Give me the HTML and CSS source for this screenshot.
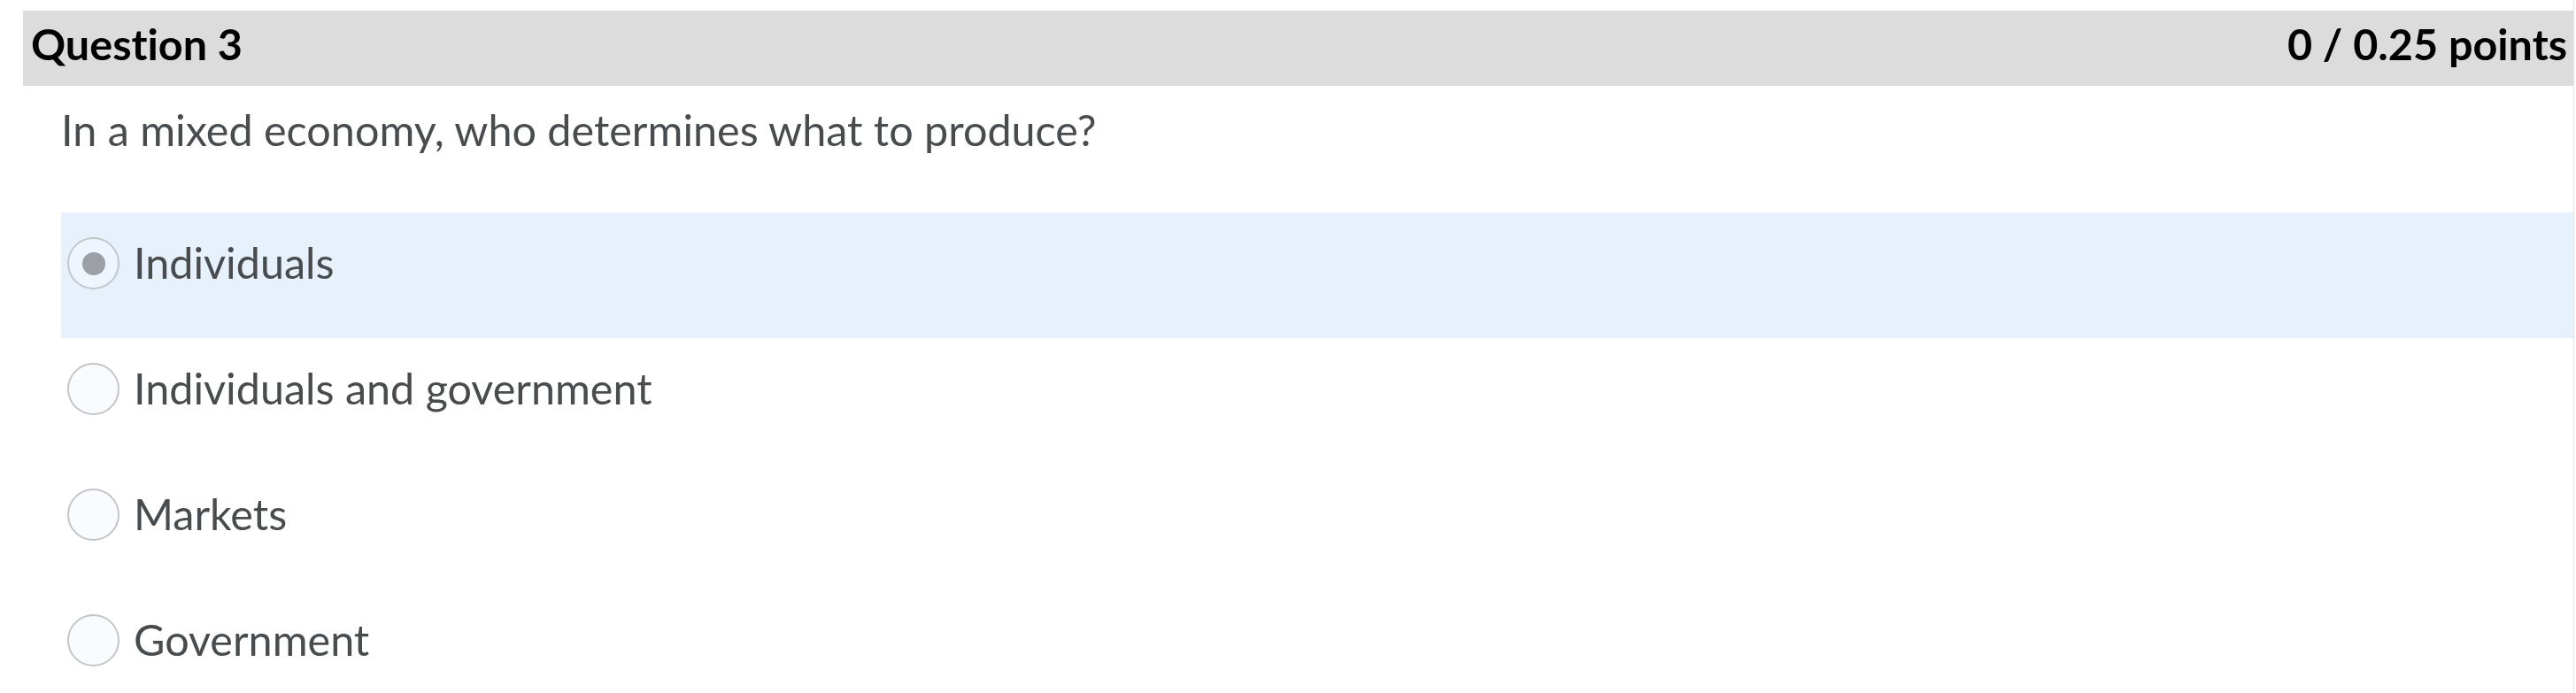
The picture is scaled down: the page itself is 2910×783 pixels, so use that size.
FILE: index.html
```html
<!DOCTYPE html>
<html lang="en">
<head>
<meta charset="utf-8">
<title>Question 3</title>
<link rel="stylesheet" href="styles.css">
</head>
<body>
<div class="frame">
  <div class="q-header">
    <h2 class="q-title">Question 3</h2>
    <div class="q-points">0 / 0.25 points</div>
  </div>
  <div class="q-body">
    <p class="q-text">In a mixed economy, who determines what to produce?</p>
    <ul class="choices">
      <li class="choice selected"><span class="radio checked"></span><span class="label">Individuals</span></li>
      <li class="choice"><span class="radio"></span><span class="label">Individuals and government</span></li>
      <li class="choice"><span class="radio"></span><span class="label">Markets</span></li>
      <li class="choice"><span class="radio"></span><span class="label">Government</span></li>
    </ul>
  </div>
</div>
</body>
</html>
```
FILE: styles.css
```css
html, body {
  margin: 0;
  padding: 0;
  background: #ffffff;
}
body {
  font-family: Lato, "Open Sans", sans-serif;
  color: #494c4e;
  overflow: hidden;
  font-variant-ligatures: none;
  font-feature-settings: "liga" 0;
}
.frame {
  width: 2908px;
  box-sizing: border-box;
  border-right: 1px solid #e4e4e4;
  padding: 12px 0 0 26px;
  min-height: 783px;
}
.q-header {
  height: 85px;
  box-sizing: border-box;
  background: #dcdcdc;
  display: flex;
  justify-content: space-between;
  align-items: flex-start;
  padding: 8px 7px 0 9px;
  color: #000000;
}
.q-title, .q-points {
  margin: 0;
  font-size: 48.5px;
  font-weight: 700;
  line-height: 58px;
}
.q-body {
  padding-left: 43px;
}
.q-text {
  margin: 20px 0 0 0;
  font-size: 48.5px;
  line-height: 58px;
}
.choices {
  list-style: none;
  margin: 65px 0 0 0;
  padding: 0;
}
.choice {
  height: 142px;
  box-sizing: border-box;
  padding: 28px 0 0 7px;
  display: flex;
  align-items: flex-start;
  gap: 16px;
}
.choice.selected {
  background: #e7f1fb;
}
.radio {
  flex: none;
  width: 59px;
  height: 59px;
  box-sizing: border-box;
  border: 2px solid #c3c6c9;
  border-radius: 50%;
  background: #f9fbfe;
  display: flex;
  align-items: center;
  justify-content: center;
}
.choice.selected .radio {
  background: #eef5fd;
}
.radio.checked::after {
  content: "";
  width: 26px;
  height: 26px;
  border-radius: 50%;
  background: #9ca0a6;
}
.label {
  font-size: 48.5px;
  line-height: 57px;
}
```
